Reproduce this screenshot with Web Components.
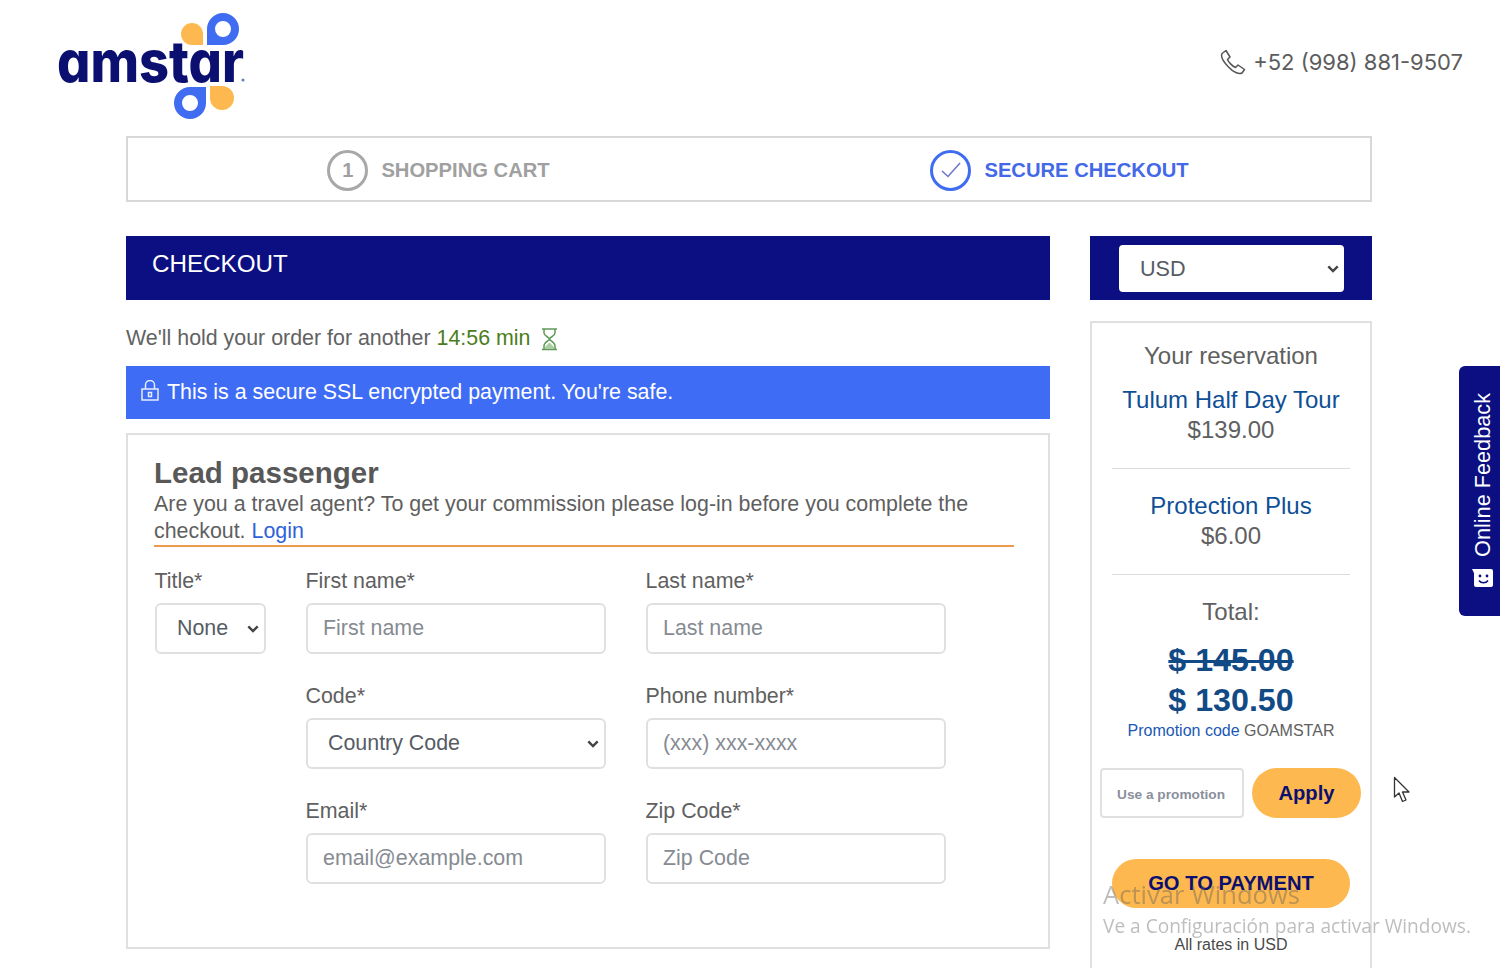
<!DOCTYPE html>
<html lang="en">
<head>
<meta charset="utf-8">
<title>Checkout</title>
<style>
  html, body { margin: 0; height: 968px; overflow: hidden; background: #fff; }
  body { font-family: "Liberation Sans", Arial, sans-serif; color: #5f5f5f; }
  .page { width: 1246px; margin: 34px 0 0 126px; display: grid; grid-template-columns: 924px 282px; column-gap: 40px; }
  .left, .right { display: flex; flex-direction: column; }
</style>
</head>
<body>
<am-header></am-header>
<am-steps>
  <am-step num="1">SHOPPING CART</am-step>
  <am-step done>SECURE CHECKOUT</am-step>
</am-steps>
<div class="page">
  <div class="left">
    <am-title>CHECKOUT</am-title>
    <am-hold time="14:56 min"></am-hold>
    <am-secure>This is a secure SSL encrypted payment. You're safe.</am-secure>
    <am-passenger></am-passenger>
  </div>
  <div class="right">
    <am-currency></am-currency>
    <am-summary></am-summary>
  </div>
</div>
<am-feedback></am-feedback>
<am-overlay></am-overlay>

<script>
// chevron used by every select, the native arrow is too small here
const CHEVRON = `url("data:image/svg+xml,%3Csvg xmlns='http://www.w3.org/2000/svg' width='12' height='8' viewBox='0 0 12 8'%3E%3Cpath d='M1.300 1.300 6 6 10.700 1.300' fill='none' stroke='%23444' stroke-width='2.400'/%3E%3C/svg%3E")`;

class AmHeader extends HTMLElement {
  constructor() {
    super();
    this.attachShadow({ mode: "open" });
    this.shadowRoot.innerHTML = `
      <style>
        :host { display: flex; justify-content: space-between; align-items: center; height: 136px; padding: 0 37px 12px 57px; box-sizing: border-box; }
        svg.logo { display: block; width: 192px; height: 112px; margin-top: 10px; overflow: visible; }
        .phone { display: flex; align-items: center; gap: 7px; font: 400 22px Inter, "Liberation Sans", sans-serif; color: #5c5c5c; margin-top: -1px; }
      </style>
      <svg class="logo" viewBox="57 10 192 112">
        <path fill="#3f6cf0" fill-rule="evenodd" d="M223 12 A16 16 0 1 1 223 44 L207 44 L207 28 A16 16 0 0 1 223 12 Z M223 20 A8 8 0 1 0 223 36 A8 8 0 1 0 223 20 Z"/>
        <path fill="#fdb94f" d="M192 22 A11 11 0 1 0 192 44 L203 44 L203 33 A11 11 0 0 0 192 22 Z"/>
        <path fill="#3f6cf0" fill-rule="evenodd" d="M190 118 A16 16 0 1 1 190 86 L206 86 L206 102 A16 16 0 0 1 190 118 Z M190 94 A8 8 0 1 0 190 110 A8 8 0 1 0 190 94 Z"/>
        <path fill="#fdb94f" d="M222 109 A12 12 0 1 0 222 85 L210 85 L210 97 A12 12 0 0 0 222 109 Z"/>
        <text x="57" y="81" font-family="Inter, sans-serif" font-weight="800" font-size="57" fill="#0b1070" textLength="187" lengthAdjust="spacingAndGlyphs" style="font-feature-settings:'cv11'">amstar</text>
        <circle cx="243" cy="79" r="1.6" fill="#6d7fc0"/>
      </svg>
      <div class="phone">
        <svg width="26" height="26" viewBox="0 0 26 26" fill="none" stroke="#555" stroke-width="1.500" stroke-linejoin="round"><path d="M2 4.500 6 1.500 10 8 7.500 10.500C8.500 13 12 17 15.500 18.500L18 16 24.500 20.500 22 24C19 25.500 13 23 8.500 18 3.500 13 .5 8 2 4.500Z"/></svg>
        <span>+52 (998) 881-9507</span>
      </div>`;
  }
}
customElements.define("am-header", AmHeader);

class AmSteps extends HTMLElement {
  constructor() {
    super();
    this.attachShadow({ mode: "open" });
    this.shadowRoot.innerHTML = `
      <style>
        :host { display: grid; grid-template-columns: 1fr 1fr; width: 1246px; height: 66px; margin-left: 126px; padding-top: 2px; box-sizing: border-box; border: 2px solid #d8d8d8; }
      </style>
      <slot></slot>`;
  }
}
customElements.define("am-steps", AmSteps);

class AmStep extends HTMLElement {
  constructor() {
    super();
    this.attachShadow({ mode: "open" });
  }
  connectedCallback() {
    const done = this.hasAttribute("done");
    const mark = done
      ? `<svg width="22" height="18" viewBox="0 0 22 18" fill="none" stroke="#6a74c9" stroke-width="1.5"><path d="M2 10 8 15.500 20 2"/></svg>`
      : `<span>${this.getAttribute("num")}</span>`;
    this.shadowRoot.innerHTML = `
      <style>
        :host { display: flex; align-items: center; justify-content: center; gap: 13px; font: 700 20.200px "Liberation Sans", Arial, sans-serif; color: ${done ? "#4368e8" : "#a0a0a0"}; }
        .circle { width: 41px; height: 41px; box-sizing: border-box; border: 3px solid ${done ? "#3f6cf0" : "#a8a8a8"}; border-radius: 50%; display: flex; align-items: center; justify-content: center; }
      </style>
      <div class="circle">${mark}</div>
      <slot></slot>`;
  }
}
customElements.define("am-step", AmStep);

class AmTitle extends HTMLElement {
  constructor() {
    super();
    this.attachShadow({ mode: "open" });
    this.shadowRoot.innerHTML = `
      <style>
        :host { display: block; height: 64px; box-sizing: border-box; padding: 14px 26px 0; background: #0b0f82; color: #fff; font-size: 24.200px; line-height: 28px; }
      </style>
      <slot></slot>`;
  }
}
customElements.define("am-title", AmTitle);

class AmHold extends HTMLElement {
  constructor() {
    super();
    this.attachShadow({ mode: "open" });
  }
  connectedCallback() {
    this.shadowRoot.innerHTML = `
      <style>
        :host { display: flex; align-items: center; height: 66px; padding-top: 11px; box-sizing: border-box; font-size: 21.400px; color: #626262; }
        b { font-weight: 400; color: #4c7d1d; margin-left: 6px; }
        svg { margin-left: 11px; }
      </style>
      <span>We'll hold your order for another</span><b>${this.getAttribute("time")}</b>
      <svg width="17" height="24" viewBox="0 0 17 24" fill="none" stroke="#5f9a58" stroke-width="1.5"><path d="M1 2H16M1 22.500H16M3 2V6C3 9 8 10 8.500 12 8 14 3 15 3 19V22.500M14 2V6C14 9 9 10 8.500 12 9 14 14 15 14 19V22.500"/><path d="M4 20 8.500 15.500 13 20V22H4Z" fill="#a8cfa0" stroke="none"/></svg>`;
  }
}
customElements.define("am-hold", AmHold);

class AmSecure extends HTMLElement {
  constructor() {
    super();
    this.attachShadow({ mode: "open" });
    this.shadowRoot.innerHTML = `
      <style>
        :host { display: flex; align-items: center; gap: 8px; height: 53px; box-sizing: border-box; padding: 0 0 0 15px; background: #3f6cf5; color: #fff; font-size: 21.400px; }
        svg { margin-bottom: 4px; }
      </style>
      <svg width="18" height="21" viewBox="0 0 18 21" fill="none" stroke="#e6ecff" stroke-width="1.5"><rect x="1" y="9" width="16" height="11"/><path d="M4.500 9V5A4.500 4.500 0 0 1 13.500 5V9"/><rect x="7.500" y="12.500" width="3" height="4"/></svg>
      <slot></slot>`;
  }
}
customElements.define("am-secure", AmSecure);

class AmField extends HTMLElement {
  constructor() {
    super();
    this.attachShadow({ mode: "open" });
  }
  connectedCallback() {
    const options = this.getAttribute("options");
    const placeholder = this.getAttribute("placeholder");
    const control = options
      ? `<select>${options.split("|").map(o => `<option>${o}</option>`).join("")}</select>`
      : `<input type="text" placeholder="${placeholder}">`;
    this.shadowRoot.innerHTML = `
      <style>
        :host { display: flex; flex-direction: column; height: 115px; font-size: 21.400px; color: #606060; }
        label { line-height: 30px; height: 37px; margin-left: -.5px; }
        input, select { height: 51px; box-sizing: border-box; width: 100%; border: 2px solid #e0e0e0; border-radius: 6px; background-color: #fff; font: 21.400px "Liberation Sans", Arial, sans-serif; color: #565c64; outline: none; }
        input { padding: 0 15px; }
        select { appearance: none; padding: 0 0 2px 20px; background-image: ${CHEVRON}; background-repeat: no-repeat; background-position: right 5px center; }
        input::placeholder { color: #868b92; opacity: 1; }
      </style>
      <label>${this.getAttribute("label")}</label>
      ${control}`;
  }
}
customElements.define("am-field", AmField);

class AmPassenger extends HTMLElement {
  constructor() {
    super();
    this.attachShadow({ mode: "open" });
    this.shadowRoot.innerHTML = `
      <style>
        :host { display: block; height: 516px; margin-top: 14px; box-sizing: border-box; border: 2px solid #e0e0e0; padding: 19px 34px 0 26px; color: #5f5f5f; }
        h2 { margin: 0; font-size: 29.500px; line-height: 37px; font-weight: 700; color: #585858; }
        p { margin: 0; font-size: 21.400px; line-height: 27px; border-bottom: 2px solid #ee9a4d; }
        a { color: #2f62d8; text-decoration: none; }
        .grid { display: grid; grid-template-columns: 111px 300px 300px; column-gap: 40px; margin-top: 19px; margin-left: 1px; }
      </style>
      <h2>Lead passenger</h2>
      <p>Are you a travel agent? To get your commission please log-in before you complete the checkout. <a href="#">Login</a></p>
      <div class="grid">
        <am-field label="Title*" options="None"></am-field>
        <am-field label="First name*" placeholder="First name"></am-field>
        <am-field label="Last name*" placeholder="Last name"></am-field>
        <span></span>
        <am-field label="Code*" options="Country Code"></am-field>
        <am-field label="Phone number*" placeholder="(xxx) xxx-xxxx"></am-field>
        <span></span>
        <am-field label="Email*" placeholder="email@example.com"></am-field>
        <am-field label="Zip Code*" placeholder="Zip Code"></am-field>
      </div>`;
  }
}
customElements.define("am-passenger", AmPassenger);

class AmCurrency extends HTMLElement {
  constructor() {
    super();
    this.attachShadow({ mode: "open" });
    this.shadowRoot.innerHTML = `
      <style>
        :host { display: block; height: 64px; box-sizing: border-box; padding: 9px 28px 0 29px; background: #0b0f82; }
        select { display: block; appearance: none; width: 225px; height: 47px; border: 0; border-radius: 4px; background-color: #fff; background-image: ${CHEVRON}; background-repeat: no-repeat; background-position: right 5px center; font: 21.600px "Liberation Sans", Arial, sans-serif; color: #565c64; padding: 0 0 0 21px; outline: none; }
      </style>
      <select><option>USD</option></select>`;
  }
}
customElements.define("am-currency", AmCurrency);

class AmSummary extends HTMLElement {
  constructor() {
    super();
    this.attachShadow({ mode: "open" });
    this.shadowRoot.innerHTML = `
      <style>
        :host { display: block; margin-top: 21px; height: 700px; box-sizing: border-box; border: 2px solid #e0e0e0; padding: 18px 20px 0; text-align: center; font-size: 24px; line-height: 30px; color: #606060; }
        .name { color: #0f4f96; }
        .first { margin-top: 14px; }
        hr { border: 0; border-top: 1px solid #dcdcdc; margin: 23px 0 0; }
        hr + .name { margin-top: 22px; }
        .total { margin-top: 22px; }
        .old, .now { font-size: 32.200px; line-height: 40px; font-weight: 700; color: #124a86; }
        .old { margin-top: 13px; text-decoration: line-through; }
        .promo { margin-top: 1px; font-size: 16px; line-height: 20px; color: #606060; }
        .promo b { font-weight: 400; color: #1a58b4; }
        .apply-row { display: flex; gap: 8px; margin: 27px -12px 0; }
        input { width: 144px; height: 50px; box-sizing: border-box; border: 2px solid #e0e0e0; border-radius: 4px; font: 700 13.700px "Liberation Sans", Arial, sans-serif; padding: 2px 15px 0; outline: none; }
        input::placeholder { color: #8a8f9c; opacity: 1; }
        button { border: 0; background: #fdb94f; color: #0b1070; font: 700 20.200px "Liberation Sans", Arial, sans-serif; border-radius: 26px; padding: 0; }
        .apply { width: 109px; height: 50px; }
        .pay { display: block; width: 100%; height: 49px; margin-top: 41px; }
        .rates { margin-top: 27px; font-size: 16px; line-height: 20px; color: #4a4a4a; }
      </style>
      <div>Your reservation</div>
      <div class="name first">Tulum Half Day Tour</div>
      <div>$139.00</div>
      <hr>
      <div class="name">Protection Plus</div>
      <div>$6.00</div>
      <hr>
      <div class="total">Total:</div>
      <div class="old">$ 145.00</div>
      <div class="now">$ 130.50</div>
      <div class="promo"><b>Promotion code</b> GOAMSTAR</div>
      <div class="apply-row">
        <input type="text" placeholder="Use a promotion">
        <button class="apply">Apply</button>
      </div>
      <button class="pay">GO TO PAYMENT</button>
      <div class="rates">All rates in USD</div>`;
  }
}
customElements.define("am-summary", AmSummary);

class AmFeedback extends HTMLElement {
  constructor() {
    super();
    this.attachShadow({ mode: "open" });
    this.shadowRoot.innerHTML = `
      <style>
        :host { position: fixed; left: 1459px; top: 366px; width: 41px; height: 250px; box-sizing: border-box; background: #0b0f82; border-radius: 6px 0 0 6px; color: #fff; display: flex; flex-direction: column-reverse; align-items: center; padding: 0 0 29px 6px; gap: 12px; font-size: 21.700px; }
        span { writing-mode: vertical-rl; transform: rotate(180deg); line-height: 1; white-space: nowrap; }
        svg { display: block; flex: none; }
      </style>
      <svg width="21" height="18" viewBox="0 0 21 18"><path fill="#fff" d="M0 0H19A2 2 0 0 1 21 2V16A2 2 0 0 1 19 18H4A2 2 0 0 1 2 16V4Z"/><circle cx="8" cy="7" r="1.400" fill="#0b0f82"/><circle cx="15" cy="7" r="1.400" fill="#0b0f82"/><path d="M7 11.500C9 14.500 14 14.500 16 11.500" fill="none" stroke="#0b0f82" stroke-width="1.500"/></svg>
      <span>Online Feedback</span>`;
  }
}
customElements.define("am-feedback", AmFeedback);

class AmOverlay extends HTMLElement {
  constructor() {
    super();
    this.attachShadow({ mode: "open" });
    this.shadowRoot.innerHTML = `
      <style>
        :host { position: fixed; left: 0; top: 0; width: 1500px; height: 968px; pointer-events: none; display: block; }
        div { position: absolute; left: 1103px; font-family: "Open Sans", "Noto Sans", sans-serif; color: rgba(90,90,90,.4); white-space: nowrap; }
        .a { top: 877px; font-size: 25.600px; line-height: 36px; }
        .b { top: 913px; font-size: 19.100px; line-height: 26px; }
        svg { position: absolute; left: 1393px; top: 776px; }
      </style>
      <div class="a">Activar Windows</div>
      <div class="b">Ve a Configuración para activar Windows.</div>
      <svg width="18" height="28" viewBox="0 0 18 28"><path d="M1.500 1.500V21L6 17 9.500 25.500 13 24 9.500 16H16Z" fill="#fff" stroke="#333" stroke-width="1.300" stroke-linejoin="round"/></svg>`;
  }
}
customElements.define("am-overlay", AmOverlay);
</script>
</body>
</html>
